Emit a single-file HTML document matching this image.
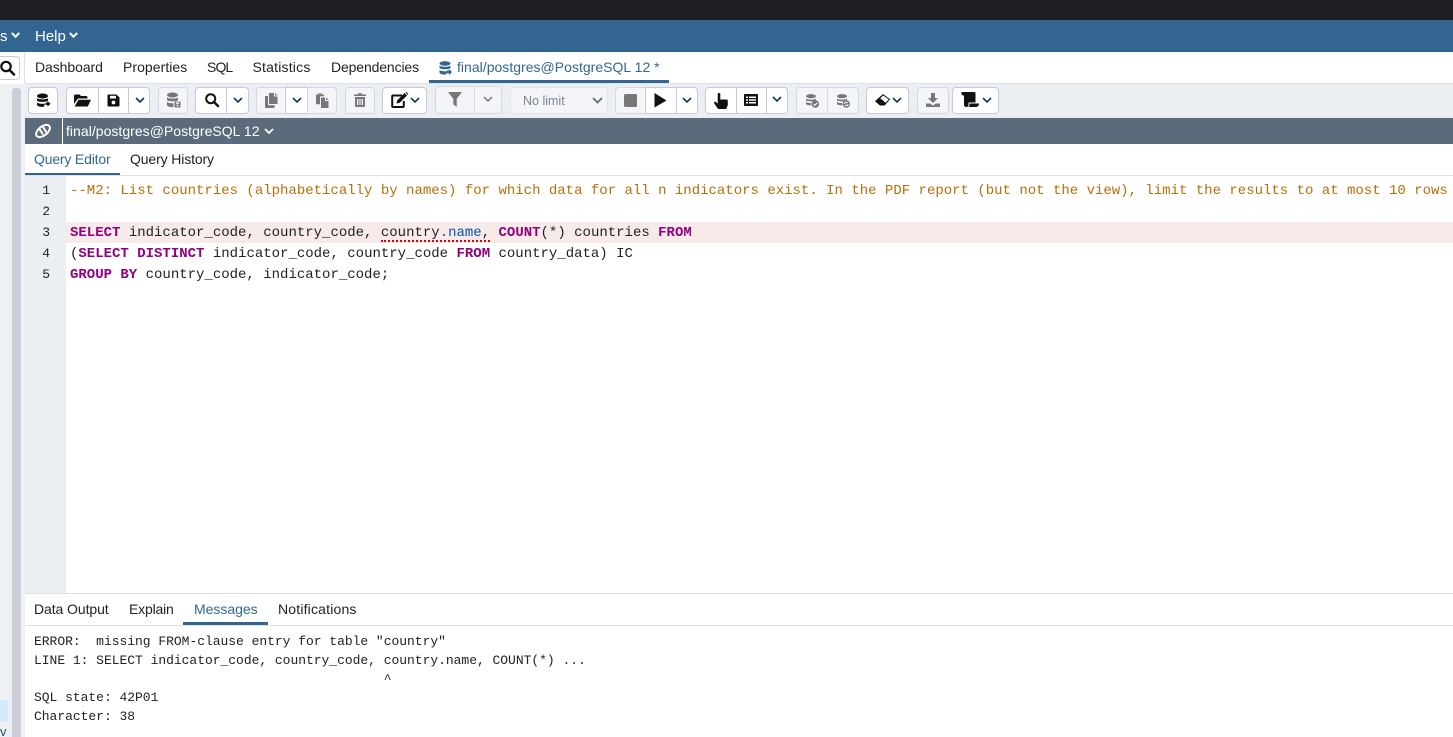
<!DOCTYPE html>
<html><head><meta charset="utf-8"><title>pgAdmin Query Tool</title>
<style>
html,body{margin:0;padding:0;width:1453px;height:737px;overflow:hidden;background:#fff}
body{position:relative;font-family:"Liberation Sans",Arial,sans-serif;font-size:14px;color:#222}
.a{position:absolute}
.t{position:absolute;white-space:nowrap;line-height:20px;height:20px}
.b{position:absolute;top:87px;height:27px;background:#fff;border:1px solid #c5cbd6;box-sizing:border-box}
.d{background:#f4f5f8;border-color:#d3d8e1}
.l{border-radius:4px 0 0 4px}.r{border-radius:0 4px 4px 0}.s{border-radius:4px}.n{border-radius:0}
svg{position:absolute;overflow:visible}
.m{font-family:"Liberation Mono",monospace;font-size:14px;line-height:21px;height:21px;white-space:pre;position:absolute;left:70px;color:#222}
.k{color:#90007f;font-weight:bold}
.c{color:#b86e0a}
.ln{position:absolute;left:25px;width:25px;text-align:right;font-family:"Liberation Mono",monospace;font-size:13px;line-height:21px;color:#222}
.o{font-family:"Liberation Mono",monospace;font-size:13px;line-height:19px;height:19px;white-space:pre;position:absolute;left:34px;color:#222;letter-spacing:-.03px}
</style></head><body>
<div class="a" style="left:0;top:0;width:1453px;height:20px;background:#1f2024"></div>
<div class="a" style="left:0;top:20px;width:1453px;height:32px;background:#326690"></div>
<div class="t" style="left:0;top:27px;color:#fff;font-size:15px">s</div>
<svg style="left:11px;top:32px" width="9" height="6" viewBox="0 0 9 6"><path d="M.8 1l3.700 3.700L8.200 1" fill="none" stroke="#fff" stroke-width="2"/></svg>
<div class="t" style="left:35px;top:27px;color:#fff;font-size:15px">Help</div>
<svg style="left:69px;top:32px" width="9" height="6" viewBox="0 0 9 6"><path d="M.8 1l3.700 3.700L8.200 1" fill="none" stroke="#fff" stroke-width="2"/></svg>

<!-- left sidebar -->
<div class="a" style="left:0;top:52px;width:25px;height:685px;background:#fff"></div>
<div class="a" style="left:24px;top:52px;width:1px;height:685px;background:#dde0e6"></div>
<div class="a" style="left:0;top:56px;width:20px;height:24px;background:#fff;border:1px solid #c8ccd4;border-left:0;border-radius:0 4px 4px 0;box-sizing:border-box"></div>
<svg style="left:0;top:59px" width="16" height="18" viewBox="0 0 16 18"><circle cx="6" cy="7.500" r="4.700" fill="none" stroke="#111" stroke-width="2.200"/><path d="M9.500 11l4.500 4.500" stroke="#111" stroke-width="2.600" stroke-linecap="round"/></svg>
<div class="a" style="left:0;top:84px;width:25px;height:653px;background:#f0f1f4"></div>
<div class="a" style="left:12px;top:88px;width:9px;height:649px;background:#c9ced8;border-radius:3px 3px 0 0"></div>
<div class="a" style="left:0;top:700px;width:8px;height:22px;background:#d4ebfb"></div>
<div class="t" style="left:0;top:723px;font-size:13px;line-height:18px;color:#26527a">v</div>

<!-- main tabs -->
<div class="t" style="left:35px;top:57px;letter-spacing:-.07px">Dashboard</div>
<div class="t" style="left:123px;top:57px;letter-spacing:.05px">Properties</div>
<div class="t" style="left:207px;top:57px;letter-spacing:-.9px">SQL</div>
<div class="t" style="left:252.500px;top:57px;letter-spacing:.2px">Statistics</div>
<div class="t" style="left:331px;top:57px;letter-spacing:-.13px">Dependencies</div>
<svg style="left:439px;top:61px" width="13" height="14" viewBox="0 0 13 14"><ellipse cx="6" cy="2.500" rx="5.500" ry="2.300" fill="#326690"/><path d="M.5 4.500c1 1.700 10 1.700 11 0V7c-1 1.700-10 1.700-11 0zM.5 8.800c1 1.700 7 1.700 8 1.200l-1.500 3.600c-2.500.2-5.800-.3-6.500-1.800z" fill="#326690"/><path d="M8 9.500h2V8l3 3-3 3v-1.600H8z" fill="#326690"/></svg>
<div class="t" style="left:457px;top:57px;color:#326690;letter-spacing:.02px">final/postgres@PostgreSQL 12 *</div>
<div class="a" style="left:429px;top:80px;width:240px;height:3px;background:#326690"></div>
<div class="a" style="left:25px;top:83px;width:1428px;height:1px;background:#dde0e6"></div>

<!-- toolbar -->
<div class="a" style="left:25px;top:84px;width:1428px;height:34px;background:#ebeef3"></div>
<div class="b s" style="left:28px;width:30px"></div>
<div class="b l" style="left:66px;width:33px"></div><div class="b n" style="left:98px;width:31px"></div><div class="b r" style="left:128px;width:22px"></div>
<div class="b d s" style="left:158px;width:30px"></div>
<div class="b l" style="left:195px;width:32px"></div><div class="b r" style="left:226px;width:23px"></div>
<div class="b d l" style="left:256px;width:30px"></div><div class="b n" style="left:285px;width:23px"></div><div class="b d r" style="left:307px;width:30px"></div>
<div class="b d s" style="left:345px;width:30px"></div>
<div class="b s" style="left:382px;width:45px"></div>
<div class="b d l" style="left:435px;width:40px;top:86px;height:28px"></div><div class="b d r" style="left:474px;width:28px;top:86px;height:28px"></div>
<div class="b d s" style="left:510px;width:98px;border-color:#e2e5ea"></div>
<div class="t" style="left:523px;top:91px;font-size:12.500px;color:#7b8499">No limit</div>
<svg style="left:592px;top:97px" width="11" height="7" viewBox="0 0 11 7"><path d="M1 1l4.500 4.500L10 1" fill="none" stroke="#5e6b80" stroke-width="1.800"/></svg>
<div class="b d l" style="left:615px;width:31px"></div><div class="b n" style="left:645px;width:32px"></div><div class="b r" style="left:676px;width:22px"></div>
<div class="b l" style="left:705px;width:32px"></div><div class="b n" style="left:736px;width:31px"></div><div class="b r" style="left:766px;width:22px"></div>
<div class="b d l" style="left:796px;width:32px"></div><div class="b d r" style="left:827px;width:32px"></div>
<div class="b s" style="left:866px;width:43px"></div>
<div class="b d s" style="left:917px;width:32px"></div>
<div class="b s" style="left:952px;width:47px"></div>

<!-- toolbar icons -->
<svg style="left:36px;top:93px" width="15" height="15" viewBox="0 0 15 15"><ellipse cx="6.500" cy="3" rx="5.500" ry="2.500" fill="#111"/><path d="M1 5c1 1.800 10 1.800 11 0v2.500c-1 1.800-10 1.800-11 0zM1 9.200c1 1.700 6 1.800 8 1.300l-1 3.300c-3 .3-6.300-.2-7-1.800z" fill="#111"/><path d="M9.500 9.500h2V8l3 2.800-3 2.900V12h-2z" fill="#111"/></svg>
<svg style="left:74px;top:94px" width="17" height="13" viewBox="0 0 17 13"><path d="M0 2c0-1 .6-1.500 1.500-1.500h4l1.500 1.500h5c1 0 1.500.5 1.500 1.500V4.500H4L0 10z" fill="#111"/><path d="M4.500 5.700H17l-3.200 6.800H.6z" fill="#111"/></svg>
<svg style="left:107px;top:94px" width="13" height="13" viewBox="0 0 13 13"><path d="M1.500.5h8L12.500 3.500v8a1 1 0 0 1-1 1h-10a1 1 0 0 1-1-1v-10a1 1 0 0 1 1-1z" fill="#111"/><rect x="3" y="1.800" width="6" height="2.700" fill="#fff"/><circle cx="6.500" cy="8.500" r="1.900" fill="#fff"/></svg>
<svg style="left:135px;top:97px" width="10" height="6" viewBox="0 0 10 6"><path d="M1 1l4 4 4-4" fill="none" stroke="#14346b" stroke-width="1.600"/></svg>
<svg style="left:166px;top:92px" width="15" height="16" viewBox="0 0 15 16"><ellipse cx="6.500" cy="3" rx="5.500" ry="2.500" fill="#777"/><path d="M1 5.200c1 1.800 10 1.800 11 0V8c-1 1.800-10 1.800-11 0zM1 9.600c1 1.700 5 1.800 6.500 1.500v4c-3 .2-5.800-.3-6.500-1.800z" fill="#777"/><rect x="8.500" y="9.500" width="6" height="6" rx=".7" fill="#777"/><rect x="10" y="10.300" width="3" height="1.500" fill="#f4f5f8"/><circle cx="11.500" cy="13.500" r="1" fill="#f4f5f8"/></svg>
<svg style="left:205px;top:93px" width="14" height="14" viewBox="0 0 14 14"><circle cx="5.700" cy="5.700" r="4.500" fill="none" stroke="#111" stroke-width="2"/><path d="M9 9l4 4" stroke="#111" stroke-width="2.400" stroke-linecap="round"/></svg>
<svg style="left:233px;top:97px" width="10" height="6" viewBox="0 0 10 6"><path d="M1 1l4 4 4-4" fill="none" stroke="#14346b" stroke-width="1.600"/></svg>
<svg style="left:265px;top:93px" width="13" height="15" viewBox="0 0 13 15"><path d="M4 0h5v3.500h3.500V11H4z" fill="#777"/><path d="M10 0l2.500 2.500H10z" fill="#777"/><path d="M0 3h3v9.200h6.500V15H1a1 1 0 0 1-1-1z" fill="#777"/></svg>
<svg style="left:292px;top:97px" width="10" height="6" viewBox="0 0 10 6"><path d="M1 1l4 4 4-4" fill="none" stroke="#14346b" stroke-width="1.600"/></svg>
<svg style="left:316px;top:93px" width="13" height="15" viewBox="0 0 13 15"><path d="M0 1.500h2.300V.4h3.400v1.100H8v1.800H4v8H0z" fill="#777"/><path d="M5 4.500h4v3.500h3.500V15H5z" fill="#777"/><path d="M10 4.500l2.500 2.500H10z" fill="#777"/></svg>
<svg style="left:354px;top:93px" width="12" height="14" viewBox="0 0 12 14"><path d="M0 1.500h3.500L4.300.3h3.400l.8 1.200H12v1.500H0z" fill="#777"/><path d="M1 4h10v9a1 1 0 0 1-1 1H2a1 1 0 0 1-1-1zM3 6v6h1.300V6zM5.400 6v6h1.200V6zM7.700 6v6H9V6z" fill="#777" fill-rule="evenodd"/></svg>
<svg style="left:391px;top:92px" width="18" height="16" viewBox="0 0 18 16"><path d="M11 3.500H2.200a1 1 0 0 0-1 1v9.500a1 1 0 0 0 1 1h9.600a1 1 0 0 0 1-1V9" fill="none" stroke="#111" stroke-width="2"/><path d="M5.500 11.500l.6-3L13.500 1l2.500 2.500-7.400 7.400z" fill="#111"/><path d="M14.300.4l1-.4 2 2-.4 1z" fill="#111"/></svg>
<svg style="left:410px;top:97px" width="10" height="6" viewBox="0 0 10 6"><path d="M1 1l4 4 4-4" fill="none" stroke="#14346b" stroke-width="1.600"/></svg>
<svg style="left:448px;top:92px" width="14" height="15" viewBox="0 0 14 15"><path d="M0 0h14L8.700 6.800V15L5.300 12.300V6.800z" fill="#777"/></svg>
<svg style="left:483px;top:96px" width="10" height="6" viewBox="0 0 10 6"><path d="M1 1l4 4 4-4" fill="none" stroke="#6b7485" stroke-width="1.500"/></svg>
<div class="a" style="left:624px;top:94px;width:13px;height:13px;background:#777;border-radius:1.500px"></div>
<svg style="left:654px;top:93px" width="13" height="15" viewBox="0 0 13 15"><path d="M.5 0L12.500 7.500.5 14.500z" fill="#111"/></svg>
<svg style="left:682px;top:97px" width="10" height="6" viewBox="0 0 10 6"><path d="M1 1l4 4 4-4" fill="none" stroke="#14346b" stroke-width="1.600"/></svg>
<svg style="left:714px;top:93px" width="14" height="16" viewBox="0 0 14 16"><path d="M3.700 1.200a1.300 1.300 0 0 1 2.600 0V6.500h6.200c.8 0 1.300.6 1.300 1.400V12l-1.500 4H4L.3 10.500c-.7-1.200.8-2.500 1.800-1.400l1.600 1.500z" fill="#111"/></svg>
<svg style="left:744px;top:94px" width="14" height="12" viewBox="0 0 14 12"><path fill-rule="evenodd" d="M1 0h12a1 1 0 0 1 1 1v10a1 1 0 0 1-1 1H1a1 1 0 0 1-1-1V1a1 1 0 0 1 1-1zM2 2.500V4h2V2.500zM5 2.500V4h7V2.500zM2 5.300v1.500h2V5.300zM5 5.300v1.500h7V5.300zM2 8v1.500h2V8zM5 8v1.500h7V8z" fill="#111"/></svg>
<svg style="left:772px;top:96px" width="10" height="6" viewBox="0 0 10 6"><path d="M1 1l4 4 4-4" fill="none" stroke="#14346b" stroke-width="1.600"/></svg>
<svg style="left:805px;top:94px" width="14" height="14" viewBox="0 0 14 14"><ellipse cx="6" cy="2.200" rx="5" ry="2.100" fill="#777"/><path d="M1 4.500c1 1.500 9 1.500 10 0V6L7 7.500 1 6.800zM1 8c1 .8 3 1 5 1l.3 2.200c-2.500.2-4.800-.2-5.300-1.200z" fill="#777"/><circle cx="10.300" cy="10" r="3.700" fill="#777"/><path d="M8.500 10l1.400 1.400 2.300-2.500" fill="none" stroke="#f4f5f8" stroke-width="1.100"/></svg>
<svg style="left:836px;top:94px" width="14" height="14" viewBox="0 0 14 14"><ellipse cx="6" cy="2.200" rx="5" ry="2.100" fill="#777"/><path d="M1 4.500c1 1.500 9 1.500 10 0V6L7 7.500 1 6.800zM1 8c1 .8 3 1 5 1l.3 2.200c-2.500.2-4.800-.2-5.300-1.200z" fill="#777"/><circle cx="10.300" cy="10" r="3.700" fill="#777"/><path d="M8.400 10a2 2 0 0 1 3.500-1M12.200 10a2 2 0 0 1-3.500 1" fill="none" stroke="#f4f5f8" stroke-width="1"/></svg>
<svg style="left:875px;top:94px" width="15" height="13" viewBox="0 0 15 13"><path d="M8 0L15 5.300 9.700 11.500H5L0 7.300z" fill="#111"/><path d="M8.200 1.400l5.400 4-2.900 3.300L5.300 4.400z" fill="#fff"/></svg>
<svg style="left:892px;top:97px" width="10" height="6" viewBox="0 0 10 6"><path d="M1 1l4 4 4-4" fill="none" stroke="#14346b" stroke-width="1.600"/></svg>
<svg style="left:926px;top:93px" width="14" height="14" viewBox="0 0 14 14"><path d="M5 0h4v5h3L7 10 2 5h3z" fill="#777"/><path d="M0 10.500h4.200L7 12.500l2.800-2H14V14H0z" fill="#777"/></svg>
<svg style="left:961px;top:92px" width="18" height="15" viewBox="0 0 18 15"><path d="M.5 0h3.500v3.500H1.800L.5 2.500z" fill="#111"/><path d="M3 0h10.500a1 1 0 0 1 1 1v9.500H7.500v2.700c0 1-1 1.800-2 1.800-1.500 0-2.500-1-2.500-2z" fill="#111"/><path d="M8.500 11.500H18c0 2-1.300 3.500-3 3.500H7.500c1-.8 1-2 1-3.500z" fill="#111"/></svg>
<svg style="left:982px;top:97px" width="10" height="6" viewBox="0 0 10 6"><path d="M1 1l4 4 4-4" fill="none" stroke="#14346b" stroke-width="1.600"/></svg>

<!-- connection bar -->
<div class="a" style="left:25px;top:118px;width:1428px;height:26px;background:#5b6b7c"></div>
<div class="a" style="left:62px;top:118px;width:1px;height:26px;background:#fff"></div>
<svg style="left:34px;top:122px" width="18" height="18" viewBox="0 0 18 18"><g fill="none" stroke="#fff" stroke-width="2"><ellipse cx="9" cy="9" rx="8" ry="4.500" transform="rotate(-38 9 9)"/><path d="M5.500 7l3.500 5.500M9 5l3.500 5.500"/></g></svg>
<div class="t" style="left:66px;top:121px;color:#fff;letter-spacing:.03px">final/postgres@PostgreSQL 12</div>
<svg style="left:264px;top:128px" width="10" height="6" viewBox="0 0 10 6"><path d="M1 1l4 4 4-4" fill="none" stroke="#fff" stroke-width="1.700"/></svg>

<!-- query tabs -->
<div class="t" style="left:34px;top:149px;color:#326690;letter-spacing:-.18px">Query Editor</div>
<div class="t" style="left:130px;top:149px;letter-spacing:-.13px">Query History</div>
<div class="a" style="left:25px;top:173px;width:95px;height:3px;background:#326690"></div>
<div class="a" style="left:25px;top:175px;width:1428px;height:1px;background:#dde0e6"></div>

<!-- editor -->
<div class="a" style="left:25px;top:176px;width:41px;height:417px;background:#ebeef3"></div>
<div class="a" style="left:66px;top:222px;width:1387px;height:21px;background:#f9eaea"></div>
<div class="ln" style="top:180px">1</div><div class="ln" style="top:201px">2</div><div class="ln" style="top:222px">3</div><div class="ln" style="top:243px">4</div><div class="ln" style="top:264px">5</div>
<div class="a" style="left:66px;top:181px;width:1387px;height:21px;overflow:hidden"><div class="m c" style="left:4px;top:0">--M2: List countries (alphabetically by names) for which data for all n indicators exist. In the PDF report (but not the view), limit the results to at most 10 rows</div></div>
<div class="m" style="top:223px"><span class="k">SELECT</span> indicator_code, country_code, country<span style="color:#05a">.name</span>, <span class="k">COUNT</span>(*) countries <span class="k">FROM</span></div>
<div class="a" style="left:381px;top:240px;width:109px;height:0;border-top:2px dotted #d00"></div>
<div class="m" style="top:244px">(<span class="k">SELECT DISTINCT</span> indicator_code, country_code <span class="k">FROM</span> country_data) IC</div>
<div class="m" style="top:265px"><span class="k">GROUP BY</span> country_code, indicator_code;</div>

<!-- results -->
<div class="a" style="left:25px;top:593px;width:1428px;height:1px;background:#dde0e6"></div>
<div class="t" style="left:34px;top:599px;letter-spacing:-.08px">Data Output</div>
<div class="t" style="left:129px;top:599px;letter-spacing:-.18px">Explain</div>
<div class="t" style="left:194px;top:599px;color:#326690;letter-spacing:-.02px">Messages</div>
<div class="t" style="left:278px;top:599px;letter-spacing:.18px">Notifications</div>
<div class="a" style="left:25px;top:625px;width:1428px;height:1px;background:#dde0e6"></div>
<div class="a" style="left:183px;top:622px;width:85px;height:3px;background:#326690"></div>
<div class="o" style="top:632px">ERROR:  missing FROM-clause entry for table "country"</div>
<div class="o" style="top:651px">LINE 1: SELECT indicator_code, country_code, country.name, COUNT(*) ...</div>
<div class="o" style="top:670px">                                             ^</div>
<div class="o" style="top:688px">SQL state: 42P01</div>
<div class="o" style="top:707px">Character: 38</div>
</body></html>
